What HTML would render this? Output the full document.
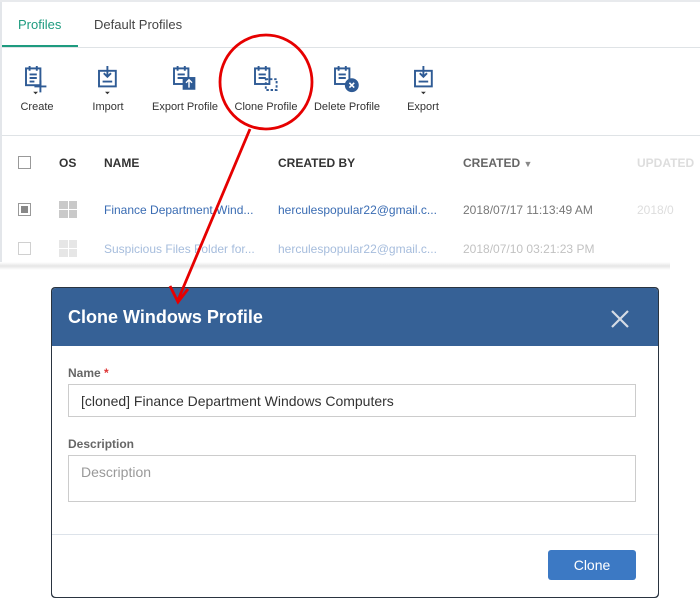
<!DOCTYPE html>
<html><head><style>
*{box-sizing:border-box;margin:0;padding:0}
body{width:700px;height:602px;background:#fff;font-family:"Liberation Sans",sans-serif;position:relative;overflow:hidden}
.a{position:absolute}
.tb{font-size:11px;color:#333;text-align:center;width:80px}
.th{font-size:12px;font-weight:bold;color:#333}
.cb{width:13px;height:13px;border:1px solid #999;background:#fff}
.win{width:18px;height:17px;display:grid;grid-template-columns:1fr 1fr;gap:1px}
.win i{background:#c9c9c9}
</style></head><body>
<div class="a" style="left:0;top:0;width:2px;height:270px;background:#e3e6ea"></div>
<div class="a" style="left:0;top:0;width:700px;height:2px;background:#e8eaed"></div>
<div class="a" style="left:18px;top:17px;font-size:13px;color:#1e9b7f">Profiles</div>
<div class="a" style="left:94px;top:17px;font-size:13px;color:#444">Default Profiles</div>
<div class="a" style="left:2px;top:45px;width:76px;height:3px;background:#1e9b7f"></div>
<div class="a" style="left:2px;top:47px;width:698px;height:1px;background:#dfe3e6"></div>
<!-- toolbar icons -->
<svg class="a" style="left:0;top:62px" width="450" height="34" fill="none" stroke="#2f5b95" stroke-width="1.6">
<g transform="translate(26,4) scale(1.2)"><rect x="0" y="2" width="12" height="14"/><path d="M3 0v4M9 0v4M3 7h6M3 10h6M3 13h4M12 12v10M7 17h10"/><path d="M6 21.5l4 0-2 2z" fill="#333" stroke="none"/></g>
<g transform="translate(99,4) scale(1.2)"><rect x="0" y="4" width="14" height="13"/><path d="M7 0v9M4 6l3 3 3-3M3 13h8"/><path d="M5 21.5l4 0-2 2z" fill="#333" stroke="none"/></g>
<g transform="translate(174,4) scale(1.2)"><rect x="0" y="2" width="12" height="13"/><path d="M3 0v4M9 0v4M3 7h6M3 10h6"/><rect x="8" y="10" width="9" height="9" fill="#2f5b95"/><path d="M12.5 18v-6M10 14l2.5-2.5 2.5 2.5" stroke="#fff" stroke-width="1.2"/></g>
<g transform="translate(255,4) scale(1.2)"><rect x="0" y="2" width="12" height="13"/><path d="M3 0v4M9 0v4M3 7h6M3 10h6"/><rect x="9" y="11" width="9" height="9" stroke-dasharray="2 1.5"/></g>
<g transform="translate(335,4) scale(1.2)"><rect x="0" y="2" width="12" height="13"/><path d="M3 0v4M9 0v4M3 7h6M3 10h6"/><circle cx="14" cy="16" r="5" fill="#2f5b95"/><path d="M12 14l4 4M16 14l-4 4" stroke="#fff" stroke-width="1.3"/></g>
<g transform="translate(415,4) scale(1.2)"><rect x="0" y="4" width="14" height="13"/><path d="M7 0v9M4 6l3 3 3-3M3 13h8"/><path d="M5 21.5l4 0-2 2z" fill="#333" stroke="none"/></g>
</svg>
<div class="a tb" style="left:-3px;top:101px">Create</div>
<div class="a tb" style="left:68px;top:101px">Import</div>
<div class="a tb" style="left:145px;top:101px;width:80px">Export Profile</div>
<div class="a tb" style="left:226px;top:101px">Clone Profile</div>
<div class="a tb" style="left:307px;top:101px">Delete Profile</div>
<div class="a tb" style="left:383px;top:101px">Export</div>
<div class="a" style="left:2px;top:135px;width:698px;height:1px;background:#dfe3e6"></div>
<!-- table -->
<div class="a cb" style="left:18px;top:156px"></div>
<div class="a th" style="left:59px;top:156px">OS</div>
<div class="a th" style="left:104px;top:156px">NAME</div>
<div class="a th" style="left:278px;top:156px">CREATED BY</div>
<div class="a th" style="left:463px;top:156px;color:#666">CREATED <span style="font-size:9px;color:#888">▼</span></div>
<div class="a th" style="left:637px;top:156px;color:#ddd">UPDATED</div>
<div class="a cb" style="left:18px;top:203px"><div style="margin:2px;width:7px;height:7px;background:#888"></div></div>
<div class="a win" style="left:59px;top:201px"><i></i><i></i><i></i><i></i></div>
<div class="a" style="left:104px;top:203px;font-size:12px;color:#3a6cb3">Finance Department Wind...</div>
<div class="a" style="left:278px;top:203px;font-size:12px;color:#3a6cb3">herculespopular22@gmail.c...</div>
<div class="a" style="left:463px;top:203px;font-size:12px;color:#777">2018/07/17 11:13:49 AM</div>
<div class="a" style="left:637px;top:203px;font-size:12px;color:#ddd">2018/0</div>
<div style="opacity:.45">
<div class="a cb" style="left:18px;top:242px"></div>
<div class="a win" style="left:59px;top:240px"><i></i><i></i><i></i><i></i></div>
<div class="a" style="left:104px;top:242px;font-size:12px;color:#3a6cb3">Suspicious Files Folder for...</div>
<div class="a" style="left:278px;top:242px;font-size:12px;color:#3a6cb3">herculespopular22@gmail.c...</div>
<div class="a" style="left:463px;top:242px;font-size:12px;color:#777">2018/07/10 03:21:23 PM</div>
</div>
<div class="a" style="left:0;top:262px;width:670px;height:8px;background:linear-gradient(#fff,#e6e6e6 50%,#fff)"></div>
<!-- modal -->
<div class="a" style="left:51px;top:287px;width:608px;height:311px;background:#2a3440;border-radius:4px"></div>
<div class="a" style="left:52px;top:288px;width:606px;height:309px;background:#fff;border-radius:4px;overflow:hidden">
<div style="height:58px;background:#366196;position:relative">
<div class="a" style="left:16px;top:19px;font-size:18px;font-weight:bold;color:#fff">Clone Windows Profile</div>
<svg class="a" style="left:559px;top:22px" width="18" height="18" stroke="#d5dbe5" stroke-width="2.2"><path d="M1 1l16 16M17 1L1 17"/></svg>
</div>
<div class="a" style="left:16px;top:78px;font-size:12px;font-weight:bold;color:#666">Name <span style="color:#d33">*</span></div>
<div class="a" style="left:16px;top:96px;width:568px;height:33px;border:1px solid #ccc;padding:8px 12px;font-size:14px;color:#333">[cloned] Finance Department Windows Computers</div>
<div class="a" style="left:16px;top:149px;font-size:12px;font-weight:bold;color:#666">Description</div>
<div class="a" style="left:16px;top:167px;width:568px;height:47px;border:1px solid #ccc;padding:8px 12px;font-size:14px;color:#999">Description</div>
<div class="a" style="left:0;top:246px;width:606px;height:1px;background:#dde3ea"></div>
<div class="a" style="left:496px;top:262px;width:88px;height:30px;background:#3c79c4;border-radius:3px;color:#fff;font-size:14px;text-align:center;line-height:30px">Clone</div>
</div>
<!-- annotation -->
<svg class="a" style="left:0;top:0" width="700" height="602" fill="none" stroke="#e60000" stroke-width="2.8">
<ellipse cx="266" cy="82" rx="46" ry="47"/>
<path d="M250 129L178 300M170 286l8 16 10-13"/>
</svg>
</body></html>
